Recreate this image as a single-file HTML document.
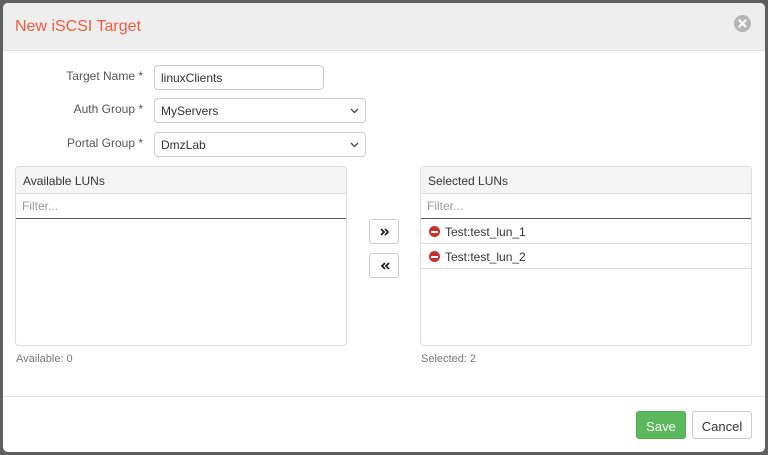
<!DOCTYPE html>
<html><head><meta charset="utf-8"><style>
*{box-sizing:border-box}
body{margin:0;width:768px;height:455px;background:#5f5f5f;font-family:"Liberation Sans",sans-serif;font-size:12px;color:#333;overflow:hidden;position:relative}
.modal{position:absolute;left:3px;top:3px;width:762px;height:449px;background:#fff;border-radius:5px;overflow:hidden}
.hdr{height:48px;background:#eeeeee;border-bottom:1px solid #e0e0e0;position:relative}
.hdr h1{margin:0;position:absolute;left:12px;top:15px;font-size:16px;font-weight:normal;color:#ef5b3f}
.close{position:absolute;right:14px;top:12px;width:17px;height:17px;border-radius:50%;background:#b5b5b5}
.lbl{position:absolute;text-align:right;width:140px;left:0;color:#555}
.inp{position:absolute;left:151px;border:1px solid #ccc;border-radius:4px;height:25px;padding:5px 6px;background:#fff}
.sel svg{position:absolute;right:6px;top:9px}
.panel{position:absolute;top:163px;width:332px;height:180px;border:1px solid #ddd;border-radius:4px;overflow:hidden}
.ph{height:27px;background:#f5f5f5;border-bottom:1px solid #ddd;padding:7px 7px;font-size:12px}
.flt{height:25px;border-bottom:1px solid #555;padding:5px 6px;color:#999}
.item{height:25px;border-bottom:1px solid #ddd;padding:6px 8px 0 8px;position:relative}
.item span{display:inline-block;width:11px;height:11px;border-radius:50%;background:#c9302c;vertical-align:-1px;margin-right:5px;position:relative}
.item span:after{content:"";position:absolute;left:2px;top:4.5px;width:7px;height:2px;background:#fff}
.mv{position:absolute;left:366px;width:30px;height:25px;border:1px solid #ccc;border-radius:3px;background:#fff}
.cnt{position:absolute;top:350px;color:#777;font-size:11px}
.foot{position:absolute;top:393px;left:0;right:0;border-top:1px solid #e5e5e5}
.btn{position:absolute;top:408px;height:28px;border-radius:3px;font-size:13px;text-align:center;padding-top:7px}
</style></head><body>
<div class="modal">
<div class="hdr"><h1>New iSCSI Target</h1><div class="close"><svg width="17" height="17" viewBox="0 0 17 17"><path d="M5.5 5.5L11.5 11.5M11.5 5.5L5.5 11.5" stroke="#fff" stroke-width="2.2" stroke-linecap="round"/></svg></div></div>
<div class="lbl" style="top:66px">Target Name *</div>
<div class="inp" style="top:62px;width:170px">linuxClients</div>
<div class="lbl" style="top:99px">Auth Group *</div>
<div class="inp sel" style="top:95px;width:212px">MyServers<svg width="9" height="6" viewBox="0 0 9 6"><path d="M1 1L4.5 4.5L8 1" fill="none" stroke="#444" stroke-width="1.3"/></svg></div>
<div class="lbl" style="top:133px">Portal Group *</div>
<div class="inp sel" style="top:129px;width:212px">DmzLab<svg width="9" height="6" viewBox="0 0 9 6"><path d="M1 1L4.5 4.5L8 1" fill="none" stroke="#444" stroke-width="1.3"/></svg></div>

<div class="panel" style="left:12px"><div class="ph">Available LUNs</div><div class="flt">Filter...</div></div>
<div class="panel" style="left:417px"><div class="ph">Selected LUNs</div><div class="flt">Filter...</div>
<div class="item"><span></span>Test:test_lun_1</div><div class="item"><span></span>Test:test_lun_2</div></div>

<div class="mv" style="top:216px"><svg width="30" height="25" viewBox="0 0 30 25"><path d="M11 9L14 12L11 15M15 9L18 12L15 15" fill="none" stroke="#222" stroke-width="1.8"/></svg></div>
<div class="mv" style="top:250px"><svg width="30" height="25" viewBox="0 0 30 25"><path d="M15 9L12 12L15 15M19 9L16 12L19 15" fill="none" stroke="#222" stroke-width="1.8"/></svg></div>

<div class="cnt" style="left:13px">Available: 0</div>
<div class="cnt" style="left:418px">Selected: 2</div>
<div class="foot"></div>
<div class="btn" style="left:633px;width:50px;background:#5cb85c;color:#fff;border:1px solid #4cae4c">Save</div>
<div class="btn" style="left:689px;width:60px;background:#fff;border:1px solid #ccc;color:#333">Cancel</div>
</div>
</body></html>
